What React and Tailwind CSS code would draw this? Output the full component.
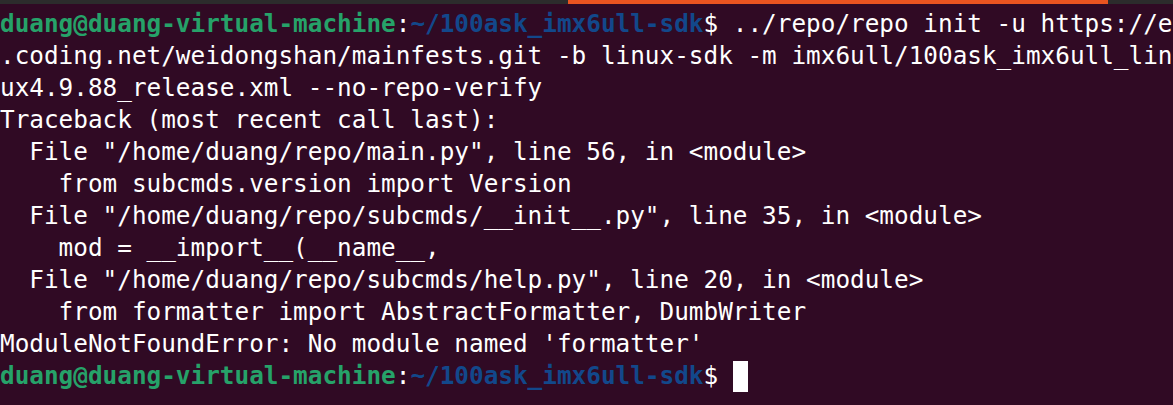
const lines = [
  '.coding.net/weidongshan/mainfests.git -b linux-sdk -m imx6ull/100ask_imx6ull_lin',
  'ux4.9.88_release.xml --no-repo-verify',
  'Traceback (most recent call last):',
  '  File "/home/duang/repo/main.py", line 56, in <module>',
  '    from subcmds.version import Version',
  '  File "/home/duang/repo/subcmds/__init__.py", line 35, in <module>',
  '    mod = __import__(__name__,',
  '  File "/home/duang/repo/subcmds/help.py", line 20, in <module>',
  '    from formatter import AbstractFormatter, DumbWriter',
  "ModuleNotFoundError: No module named 'formatter'",
];

function Prompt({ children }) {
  return (
    <div className="whitespace-pre">
      <span className="font-bold text-[#26a269]">duang@duang-virtual-machine</span>
      <span>:</span>
      <span className="font-bold text-[#12488b]">~/100ask_imx6ull-sdk</span>
      <span>$ </span>
      {children}
    </div>
  );
}

export default function App() {
  return (
    <div className="w-[1173px] h-[405px] overflow-hidden bg-[#300a24] text-white">
      {/* tab strip */}
      <div className="flex h-[4px] bg-[#2c2c2c]">
        <div className="w-[568px]" />
        <div className="w-[540px] bg-[#e95420]" />
      </div>

      <div className="pt-[4px] font-['DejaVu_Sans_Mono',monospace] text-[24.35px] leading-[32px]">
        <Prompt>../repo/repo init -u https://e</Prompt>
        {lines.map((line, i) => (
          <div key={i} className="whitespace-pre">{line}</div>
        ))}
        <Prompt>
          <span className="inline-block w-[15px] h-[31px] align-[-8px] bg-white" />
        </Prompt>
      </div>
    </div>
  );
}
